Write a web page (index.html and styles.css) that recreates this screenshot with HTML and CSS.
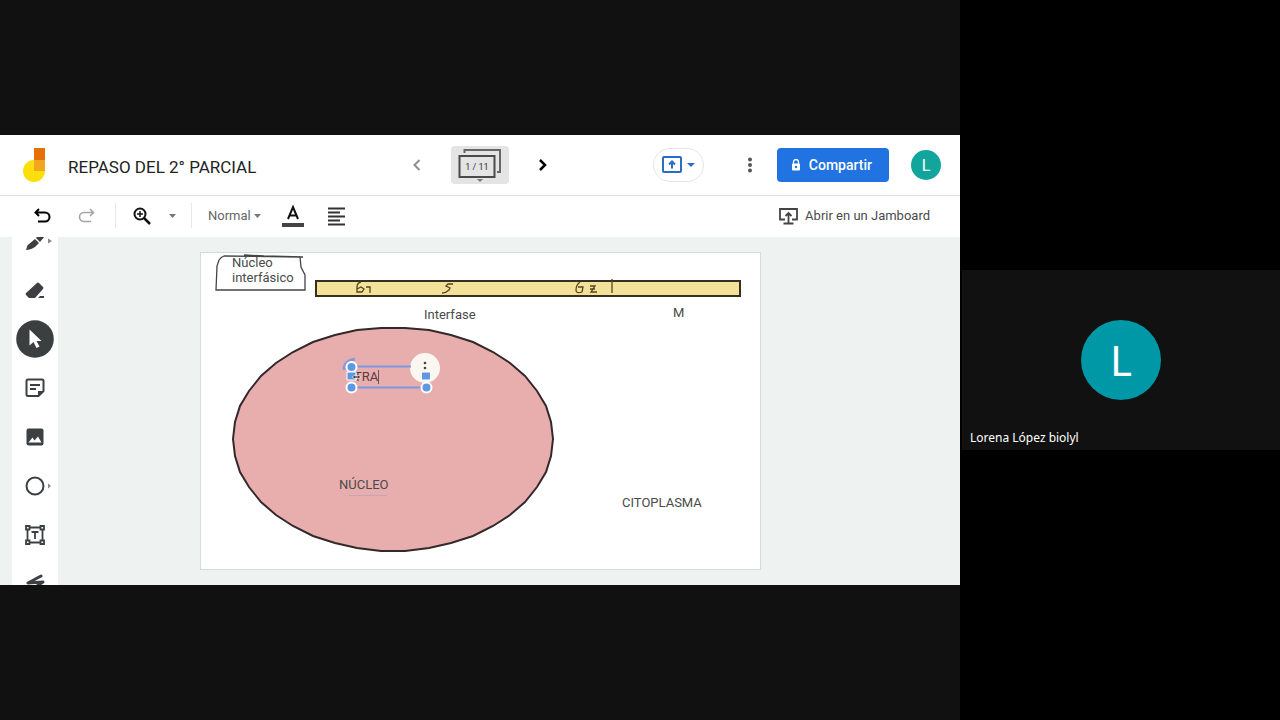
FILE: index.html
```
<!DOCTYPE html>
<html lang="es">
<head>
<meta charset="UTF-8" />
<meta name="viewport" content="width=device-width, initial-scale=1" />
<title>REPASO DEL 2° PARCIAL</title>
<link rel="stylesheet" href="styles.css">
</head>
<body>

<main class="presentation">
  <div class="screen">

    <header class="topbar">
      <div class="doc">
        <svg class="logo" width="22" height="35" viewBox="0 0 22 35" aria-hidden="true">
          <circle cx="11" cy="23" r="11" fill="#fbdf0c" />
          <path d="M11 12h11v11H11z" fill="#fbdf0c" />
          <path d="M11 0h11v12H11z" fill="#e37108" />
          <path d="M11 12h11v11H11z" fill="#f3a51f" />
        </svg>
        <h1>REPASO DEL 2° PARCIAL</h1>
      </div>

      <nav class="frames">
        <button class="icon-btn" aria-label="Marco anterior">
          <svg width="24" height="24" viewBox="0 0 24 24"><path d="M14.500 7l-5 5 5 5" fill="none" stroke="#8d8d8d" stroke-width="2" /></svg>
        </button>
        <button class="frame-btn">
          <svg class="frame-stack" width="44" height="34" viewBox="0 0 44 34" aria-hidden="true">
            <path d="M6.500 5V2H42v22h-3" fill="none" stroke="#666" stroke-width="2" />
            <path d="M1.500 8h35v21h-35z" fill="none" stroke="#4a4a4a" stroke-width="2" />
            <path d="M19 31h6l-3 3z" fill="#777" />
          </svg>
          <span class="frame-count">1 / 11</span>
        </button>
        <button class="icon-btn" aria-label="Marco siguiente">
          <svg width="24" height="24" viewBox="0 0 24 24"><path d="M9 7l5 5-5 5" fill="none" stroke="#000" stroke-width="2.500" /></svg>
        </button>
      </nav>

      <div class="actions">
        <button class="present-btn" aria-label="Presentar">
          <svg width="20" height="18" viewBox="0 0 20 18">
            <rect x="1" y="1" width="18" height="15" rx="1" fill="none" stroke="#2a6cc7" stroke-width="2" />
            <path d="M10 12.500V6M7 8.500l3-3 3 3" fill="none" stroke="#2a6cc7" stroke-width="2" />
          </svg>
          <svg width="8" height="4" viewBox="0 0 8 4"><path d="M0 0h8L4 4z" fill="#2a6cc7" /></svg>
        </button>
        <button class="icon-btn" aria-label="Más acciones">
          <svg width="24" height="24" viewBox="0 0 24 24" fill="#555"><circle cx="12" cy="6.500" r="2" /><circle cx="12" cy="12" r="2" /><circle cx="12" cy="17.500" r="2" /></svg>
        </button>
        <button class="share-btn">
          <svg width="10" height="12" viewBox="0 0 10 12" aria-hidden="true">
            <path d="M2.500 5V3a2.500 2.500 0 0 1 5 0v2" fill="none" stroke="#fff" stroke-width="1.300" />
            <rect x="1" y="4.500" width="8" height="7" rx="1" fill="#fff" />
            <circle cx="5" cy="8" r="1.200" fill="#2073e0" />
          </svg>
          Compartir
        </button>
        <button class="avatar">L</button>
      </div>
    </header>

    <div class="toolbar">
      <button class="icon-btn undo" aria-label="Deshacer">
        <svg width="24" height="24" viewBox="0 0 24 24"><path d="M9 5L5.500 8.500 9 12M5.500 8.500H15a4.200 4.200 0 0 1 0 9H8" fill="none" stroke="#000" stroke-width="2" /></svg>
      </button>
      <button class="icon-btn redo" aria-label="Rehacer">
        <svg width="24" height="24" viewBox="0 0 24 24"><path d="M15 5l3.500 3.500L15 12M18.500 8.500H9a4.200 4.200 0 0 0 0 9h7" fill="none" stroke="#a5a5a5" stroke-width="1.600" /></svg>
      </button>
      <span class="divider"></span>
      <button class="icon-btn" aria-label="Zoom">
        <svg width="24" height="24" viewBox="0 0 24 24" fill="none" stroke="#111">
          <circle cx="10" cy="10" r="5.500" stroke-width="2" />
          <path d="M14 14l6 6" stroke-width="2.500" />
          <path d="M7 10h6M10 7v6" stroke-width="1.500" />
        </svg>
      </button>
      <button class="icon-btn caret-btn" aria-label="Opciones de zoom">
        <svg width="7" height="4" viewBox="0 0 7 4"><path d="M0 0h7L3.500 4z" fill="#777" /></svg>
      </button>
      <span class="divider"></span>
      <label class="text-style">
        <select aria-label="Estilo de texto">
          <option>Normal</option>
        </select>
        <svg width="7" height="4" viewBox="0 0 7 4" aria-hidden="true"><path d="M0 0h7L3.500 4z" fill="#777" /></svg>
      </label>
      <button class="icon-btn color-btn" aria-label="Color del texto">
        <svg width="24" height="24" viewBox="0 0 24 24">
          <path d="M7 15L12 3l5 12M8.500 11.500h7" fill="none" stroke="#111" stroke-width="2" />
          <path d="M1 19h22v4H1z" fill="#444" />
        </svg>
      </button>
      <button class="icon-btn" aria-label="Alinear">
        <svg width="24" height="24" viewBox="0 0 24 24"><path d="M3 4.500h17M3 8.500h12M3 12.500h17M3 16.500h12M3 20.500h17" fill="none" stroke="#333" stroke-width="1.800" /></svg>
      </button>
      <button class="jamboard-btn">
        <svg width="19" height="18" viewBox="0 0 19 18" aria-hidden="true">
          <path d="M6 12.500H1V2h17v10.500h-5M9.500 16V6M6.500 9l3-3 3 3M4.500 16.500h10" fill="none" stroke="#444" stroke-width="1.800" />
        </svg>
        Abrir en un Jamboard
      </button>
    </div>

    <div class="stage">
      <div class="tools">
        <button class="tool" aria-label="Lápiz">
          <svg width="40" height="40" viewBox="0 0 40 40" fill="#3c4043">
            <path d="M20 18l4 4-4 4c-3 2-6 3-9 3 1-3 1-5 3-6zM21 17l4 4 5-6-4-4z" />
            <path d="M33 17.500v5l4-2.500z" fill="#888" />
          </svg>
        </button>
        <button class="tool" aria-label="Borrador">
          <svg width="40" height="40" viewBox="0 0 40 40" fill="#3c4043">
            <path d="M22 13q1-1 2 0l4 4q1 1 0 2l-8 9h-6l-3-3q-1-1 0-2zM25 26h4v2h-6z" />
          </svg>
        </button>
        <button class="tool" aria-label="Seleccionar">
          <svg width="40" height="40" viewBox="0 0 40 40">
            <circle cx="20" cy="20" r="18.800" fill="#3b3f3f" />
            <path d="M14.500 10.500v16l4-3.500 3 6 3-1.500-3-5.500h5z" fill="#fff" />
          </svg>
        </button>
        <button class="tool" aria-label="Nota adhesiva">
          <svg width="40" height="40" viewBox="0 0 40 40">
            <path d="M13 11.500h14q1.500 0 1.500 1.500v10l-5 5H13q-1.500 0-1.500-1.500V13q0-1.500 1.500-1.500z" fill="none" stroke="#3c4043" stroke-width="2" />
            <path d="M15 17h10M15 21h6" stroke="#3c4043" stroke-width="1.800" />
            <path d="M23 28v-5h6z" fill="#3c4043" />
          </svg>
        </button>
        <button class="tool" aria-label="Añadir imagen">
          <svg width="40" height="40" viewBox="0 0 40 40">
            <rect x="11.500" y="11.500" width="17" height="17" rx="2" fill="#3c4043" />
            <path d="M13.500 25.500l4-5 2 3 3.500-4 3.500 6z" fill="#fff" />
          </svg>
        </button>
        <button class="tool" aria-label="Círculo">
          <svg width="40" height="40" viewBox="0 0 40 40">
            <circle cx="20" cy="20" r="8.500" fill="none" stroke="#3c4043" stroke-width="2" />
            <path d="M33 17.500v5l3-2.500z" fill="#888" />
          </svg>
        </button>
        <button class="tool" aria-label="Cuadro de texto">
          <svg width="40" height="40" viewBox="0 0 40 40" fill="none" stroke="#3c4043" stroke-width="1.800">
            <path d="M14 12.500h12M14 27.500h12M12.500 14v12M27.500 14v12" />
            <path d="M11 11h3.500v3.500H11zM25.500 11H29v3.500h-3.500zM11 25.500h3.500V29H11zM25.500 25.500H29V29h-3.500zM16.500 17h7M20 17v7" />
          </svg>
        </button>
        <button class="tool" aria-label="Láser">
          <svg width="40" height="40" viewBox="0 0 40 40">
            <path d="M26 12l-13 7 15-1-12 8" fill="none" stroke="#3c4043" stroke-width="3" stroke-linecap="round" stroke-linejoin="round" />
          </svg>
        </button>
      </div>

      <div class="canvas">
        <div class="board">
          <svg class="drawing" viewBox="0 0 559 316">
            <!-- cell nucleus -->
            <polygon class="nucleus" points="32,186 34,169 39,153 48,138 60,123 75,110 92,99 112,89 134,82 156,77 180,75 204,75 228,77 250,82 272,89 292,99 309,110 324,123 336,138 345,153 350,169 352,186 350,203 345,219 336,234 324,249 309,262 292,273 272,283 250,290 228,295 204,298 180,298 156,295 134,290 112,283 92,273 75,262 60,249 48,234 39,219 34,203" />

            <!-- cell cycle bar -->
            <rect class="cycle" x="115" y="28" width="424" height="15" />
            <g class="pen">
              <path d="M160 29q-4 1-4 5v5l5 0 2-3-3-2-4 2M165 34h4v6" />
              <path d="M252 31h-5l-2 2 4 2-1 2q-3 3-7 3" />
              <path d="M379 29q-4 3-4 8 0 4 6 2l1-5h-5M389 33h5l-4 6h6M389 36h5" />
              <path d="M411 26v14" />
            </g>
            <path class="pen box" d="M15 37l1-24 2-6q2-3 5-4l76 1 1 10 4 8v15zM43 2l20 1 39 1" />

            <text x="31" y="14">Núcleo</text>
            <text x="31" y="29">interfásico</text>
            <text x="223" y="66">Interfase</text>
            <text x="472" y="64">M</text>
            <text x="138" y="236">NÚCLEO</text>
            <text x="421" y="254">CITOPLASMA</text>
            <path class="spell" d="M148 242.500h38" />

            <!-- text box being edited -->
            <text class="editing" x="153" y="128">TRA</text>
            <path class="text-caret" d="M177.500 117v14" />
            <circle cx="224" cy="115" r="15" fill="#fbf6ef" />
            <path class="outline" d="M150 113.500h60M150 134.500h75" />
            <path class="rotate" d="M143 117q0-9 11-11" />
            <g class="handle">
              <circle cx="150.500" cy="114" r="5" />
              <path d="M146 119h9v8h-9zM220.500 119h9v8h-9z" />
              <circle cx="150.500" cy="134.500" r="5" />
              <circle cx="225.500" cy="134.500" r="5" />
            </g>
            <g fill="#444"><circle cx="224" cy="110" r="1.300" /><circle cx="224" cy="115" r="1.300" /></g>
            <path d="M151 124l3-2v1h3v-1l3 2-3 2v-1h-3v1z" fill="#444" stroke="#fff" stroke-width=".6" />
          </svg>
        </div>
      </div>
    </div>

  </div>
</main>

<aside class="participants">
  <div class="tile">
    <div class="tile-avatar">L</div>
    <span class="tile-name">Lorena López biolyl</span>
  </div>
</aside>

</body>
</html>
```
FILE: styles.css
```
* {
  box-sizing: border-box;
}
body {
  margin: 0;
  min-height: 100vh;
  display: grid;
  grid-template-columns: 3fr 1fr;
  background: #000;
  font-family: Roboto, sans-serif;
}
button {
  padding: 0;
  border: none;
  background: none;
  font-family: inherit;
  cursor: pointer;
}
svg {
  display: block;
  flex-shrink: 0;
}

/* Shared screen */
.presentation {
  background: #111;
  display: flex;
  align-items: center;
}
.screen {
  flex: 1;
  background: #fff;
}

.topbar {
  display: grid;
  grid-template-columns: 1fr auto 1fr;
  align-items: center;
  height: 61px;
  padding: 0 19px;
  border-bottom: 1px solid #e0e0e0;
}
.doc {
  display: flex;
  align-items: center;
  gap: 23px;
  padding-left: 4px;
}
h1 {
  margin: 0;
  padding-top: 3px;
  font-size: 17px;
  line-height: 20px;
  font-weight: 400;
  color: #222;
  white-space: nowrap;
}
.icon-btn {
  display: flex;
  align-items: center;
  justify-content: center;
  width: 24px;
  height: 24px;
}
.frames {
  display: flex;
  align-items: center;
  gap: 22px;
}
.frame-btn {
  display: grid;
  place-items: center;
  width: 58px;
  height: 38px;
  border-radius: 4px;
  background: #e4e4e4;
}
.frame-stack,
.frame-count {
  grid-area: 1 / 1;
}
.frame-count {
  padding: 3px 6px 0 0;
  font-size: 9px;
  color: #333;
}
.actions {
  display: flex;
  align-items: center;
  justify-content: flex-end;
}
.present-btn {
  display: flex;
  align-items: center;
  justify-content: center;
  gap: 5px;
  width: 51px;
  height: 34px;
  margin-right: 34px;
  border: 1px solid #e4e6e8;
  border-radius: 17px;
}
.share-btn {
  display: flex;
  align-items: center;
  gap: 8px;
  height: 34px;
  margin: 0 22px 0 15px;
  padding: 0 17px 0 14px;
  border-radius: 4px;
  background: #2073e0;
  color: #fff;
  font-size: 14px;
  font-weight: 500;
}
.avatar {
  width: 30px;
  height: 30px;
  border-radius: 50%;
  background: #12a59b;
  color: #fff;
  font-size: 16px;
}

.toolbar {
  display: flex;
  align-items: center;
  height: 41px;
  padding: 0 30px 2px;
}
.redo {
  margin-left: 21px;
}
.divider {
  width: 1px;
  height: 25px;
  margin: 0 14px 0 16px;
  background: #e8e8e8;
}
.caret-btn {
  width: 20px;
  margin-left: 8px;
}
.caret-btn + .divider {
  margin-left: 9px;
  margin-right: 16px;
}
.text-style {
  display: flex;
  align-items: center;
  gap: 3px;
}
.text-style select {
  appearance: none;
  padding: 0;
  border: none;
  background: none;
  font-family: inherit;
  font-size: 13px;
  color: #666;
}
.color-btn {
  margin: 0 20px;
}
.jamboard-btn {
  display: flex;
  align-items: center;
  gap: 7px;
  margin-left: auto;
  font-size: 13px;
  color: #4a4a4a;
}

.stage {
  display: flex;
  overflow: hidden;
  background: #eef2f1;
}
/* size containment keeps the long tool list from stretching the stage */
.tools {
  contain: size;
  display: flex;
  flex-direction: column;
  align-items: center;
  justify-content: center;
  width: 46px;
  margin-left: 12px;
  padding-top: 3px;
  background: #fff;
}
.tool {
  display: flex;
  flex-shrink: 0;
  align-items: center;
  width: 40px;
  height: 49px;
  margin-right: 1px;
}
.canvas {
  flex: 1;
  margin-right: 57px;
  padding: 15px 142px;
}
.board {
  background: #fff;
  border: 1px solid #d3dbdb;
}

/* Drawing on the board */
.drawing {
  width: 100%;
}
.drawing text {
  font-size: 13px;
  fill: #4a4a4a;
}
.drawing .editing {
  fill: #5c3c3e;
}
.nucleus {
  fill: #e8aeae;
  stroke: #33282a;
  stroke-width: 2;
}
.cycle {
  fill: #f4e29a;
  stroke: #33301f;
  stroke-width: 2;
}
.pen {
  fill: none;
  stroke: #54451f;
  stroke-width: 1.3;
}
.box {
  stroke: #444;
}
.spell {
  stroke: #c5a3b8;
}
.text-caret {
  stroke: #6b5557;
}
.outline {
  stroke: #7b98e0;
  stroke-width: 2;
}
.rotate {
  fill: none;
  stroke: #8c98d8;
  stroke-width: 3;
}
.handle {
  fill: #5f98e0;
  stroke: #fff;
  stroke-width: 1;
}
.handle circle {
  stroke-width: 2;
}

/* Participants column */
.participants {
  display: flex;
  flex-direction: column;
  justify-content: center;
  padding-left: 2px;
}
.tile {
  display: grid;
  grid-template-rows: 1fr 80px 1fr;
  justify-items: center;
  height: 180px;
  background: #111;
  font-family: "Noto Sans", sans-serif;
  color: #fff;
}
.tile-avatar {
  grid-row: 2;
  display: flex;
  align-items: center;
  justify-content: center;
  width: 80px;
  height: 80px;
  border-radius: 50%;
  background: #0097a7;
  font-size: 42px;
  line-height: 80px;
}
.tile-name {
  grid-row: 3;
  align-self: end;
  justify-self: start;
  padding: 0 8px 3px;
  font-size: 12px;
  line-height: 18px;
}
```
